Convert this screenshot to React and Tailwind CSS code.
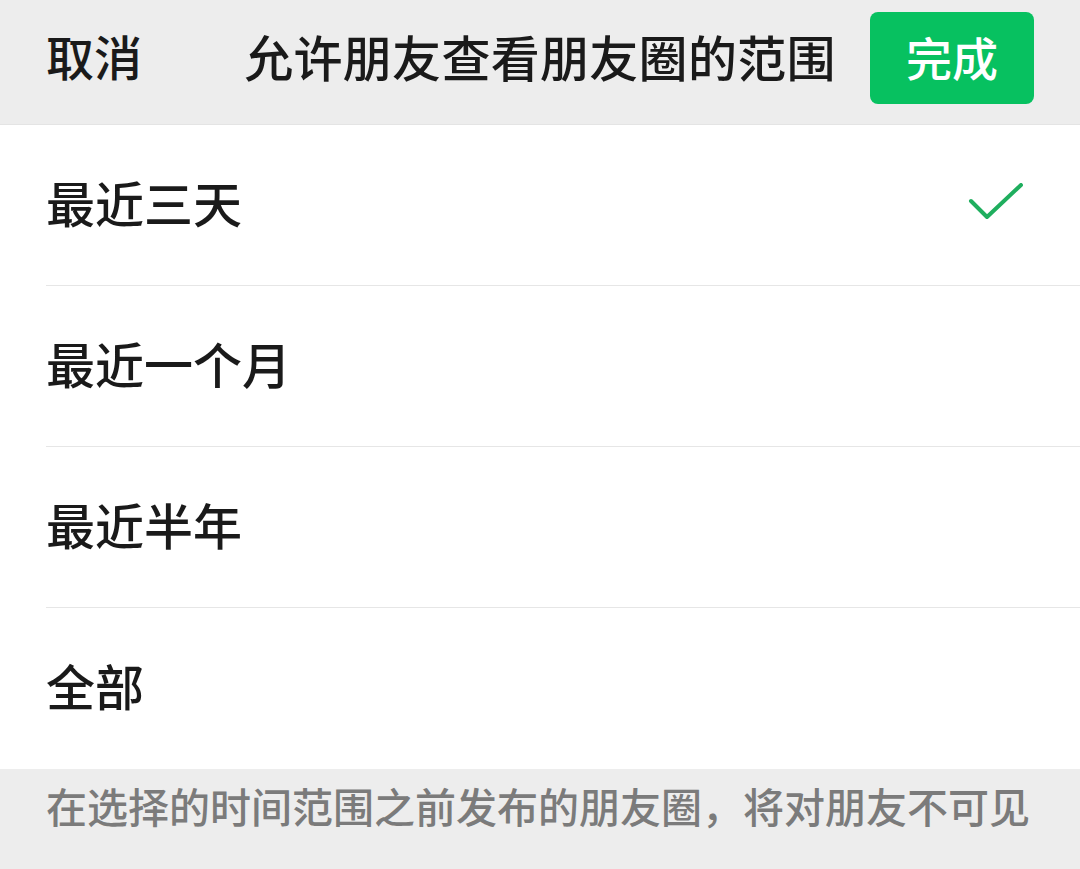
const FONT = { fontFamily: '"Noto Sans CJK SC", "Noto Sans", sans-serif' };

const options = ["最近三天", "最近一个月", "最近半年", "全部"];

function Check() {
  return (
    <svg width="60" height="44" viewBox="0 0 60 44" fill="none">
      <path
        d="M5 18 L21 34 L55 2"
        stroke="#1fae5e"
        strokeWidth="4"
        strokeLinecap="round"
        strokeLinejoin="round"
      />
    </svg>
  );
}

export default function App() {
  const selected = 0;
  return (
    <div className="w-[1080px] h-[869px] bg-white flex flex-col overflow-hidden" style={FONT}>
      <header className="h-[125px] shrink-0 bg-[#ededed] border-b border-[#e4e4e4] pb-[8px] grid grid-cols-[1fr_auto_1fr] items-center">
        <div className="pl-[46px] pb-[6px] text-[48px] leading-none font-medium text-[#1a1a1a]">取消</div>
        <div className="pb-[6px] text-[49px] leading-none font-medium text-[#1a1a1a] tracking-[0.3px]">允许朋友查看朋友圈的范围</div>
        <div className="flex justify-end pr-[46px]">
          <button className="w-[164px] h-[92px] rounded-[8px] bg-[#07c160] text-white text-[46px] leading-none font-medium flex items-center justify-center pb-[4px]">
            完成
          </button>
        </div>
      </header>

      <ul className="flex flex-col">
        {options.map((label, i) => (
          <li key={label} className="pl-[46px]">
            <div
              className={
                "h-[161px] flex items-center justify-between pr-[54px] " +
                (i < options.length - 1 ? "border-b border-[#e6e6e6]" : "")
              }
            >
              <span className="text-[49px] leading-none font-medium text-[#1a1a1a] pb-[8px]">{label}</span>
              {i === selected && <Check />}
            </div>
          </li>
        ))}
      </ul>

      <footer className="flex-1 bg-[#ededed] pl-[46px] pt-[6px]">
        <p className="text-[41px] leading-[60px] font-medium text-[#7b7b7b]">
          在选择的时间范围之前发布的朋友圈，将对朋友不可见
        </p>
      </footer>
    </div>
  );
}
